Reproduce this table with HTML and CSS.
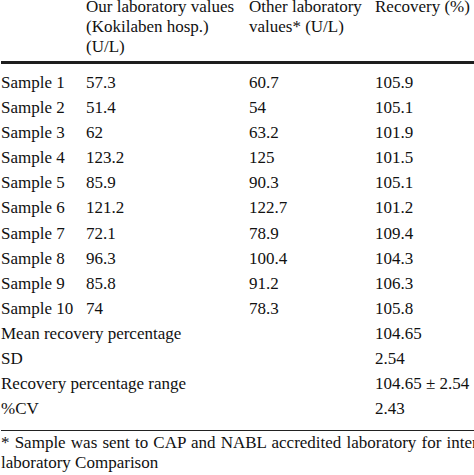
FILE: index.html
```html
<!DOCTYPE html>
<html>
<head>
<meta charset="utf-8">
<link rel="stylesheet" href="styles.css">
</head>
<body>
<div class="page">
  <div class="table">
    <div class="row head">
      <div class="cell"></div>
      <div class="cell">Our laboratory values (Kokilaben hosp.) (U/L)</div>
      <div class="cell">Other laboratory values* (U/L)</div>
      <div class="cell">Recovery (%)</div>
    </div>
    <div class="body">
      <div class="row"><div class="cell">Sample 1</div><div class="cell">57.3</div><div class="cell">60.7</div><div class="cell">105.9</div></div>
      <div class="row"><div class="cell">Sample 2</div><div class="cell">51.4</div><div class="cell">54</div><div class="cell">105.1</div></div>
      <div class="row"><div class="cell">Sample 3</div><div class="cell">62</div><div class="cell">63.2</div><div class="cell">101.9</div></div>
      <div class="row"><div class="cell">Sample 4</div><div class="cell">123.2</div><div class="cell">125</div><div class="cell">101.5</div></div>
      <div class="row"><div class="cell">Sample 5</div><div class="cell">85.9</div><div class="cell">90.3</div><div class="cell">105.1</div></div>
      <div class="row"><div class="cell">Sample 6</div><div class="cell">121.2</div><div class="cell">122.7</div><div class="cell">101.2</div></div>
      <div class="row"><div class="cell">Sample 7</div><div class="cell">72.1</div><div class="cell">78.9</div><div class="cell">109.4</div></div>
      <div class="row"><div class="cell">Sample 8</div><div class="cell">96.3</div><div class="cell">100.4</div><div class="cell">104.3</div></div>
      <div class="row"><div class="cell">Sample 9</div><div class="cell">85.8</div><div class="cell">91.2</div><div class="cell">106.3</div></div>
      <div class="row"><div class="cell">Sample 10</div><div class="cell">74</div><div class="cell">78.3</div><div class="cell">105.8</div></div>
      <div class="row"><div class="cell span">Mean recovery percentage</div><div class="cell">104.65</div></div>
      <div class="row"><div class="cell span">SD</div><div class="cell">2.54</div></div>
      <div class="row"><div class="cell span">Recovery percentage range</div><div class="cell">104.65 ± 2.54</div></div>
      <div class="row"><div class="cell span">%CV</div><div class="cell">2.43</div></div>
    </div>
  </div>
  <div class="footnote">
    <div class="fn-line justified">* Sample was sent to CAP and NABL accredited laboratory for inter-</div>
    <div class="fn-line">laboratory Comparison</div>
  </div>
</div>
</body>
</html>
```

FILE: styles.css
```css
html, body {
  margin: 0;
  padding: 0;
  background: #ffffff;
}

body {
  width: 474px;
  height: 475px;
  overflow: hidden;
}

.page {
  width: 474px;
  height: 475px;
  overflow: hidden;
  padding-left: 1px;
  box-sizing: border-box;
  font-family: "Liberation Serif", "Times New Roman", serif;
  font-size: 17px;
  color: #111111;
}

.table {
  margin-top: -3px;
}

.row {
  display: grid;
  grid-template-columns: 85px 163px 126px 1fr;
}

.cell {
  white-space: normal;
}

.cell.span {
  grid-column: 1 / 4;
}

.head {
  line-height: 20px;
  padding-bottom: 4px;
  border-bottom: 3px solid #1e1e1e;
}

.body {
  padding-top: 6px;
  padding-bottom: 9px;
  border-bottom: 1px solid #222222;
  line-height: 25.1px;
  white-space: nowrap;
}

.body .cell {
  white-space: nowrap;
}

.footnote {
  padding-top: 2px;
  line-height: 20px;
  width: 473px;
  overflow: hidden;
}

.fn-line {
  white-space: nowrap;
}

.fn-line.justified {
  width: 482px;
  white-space: normal;
  text-align: justify;
  text-align-last: justify;
}
```
